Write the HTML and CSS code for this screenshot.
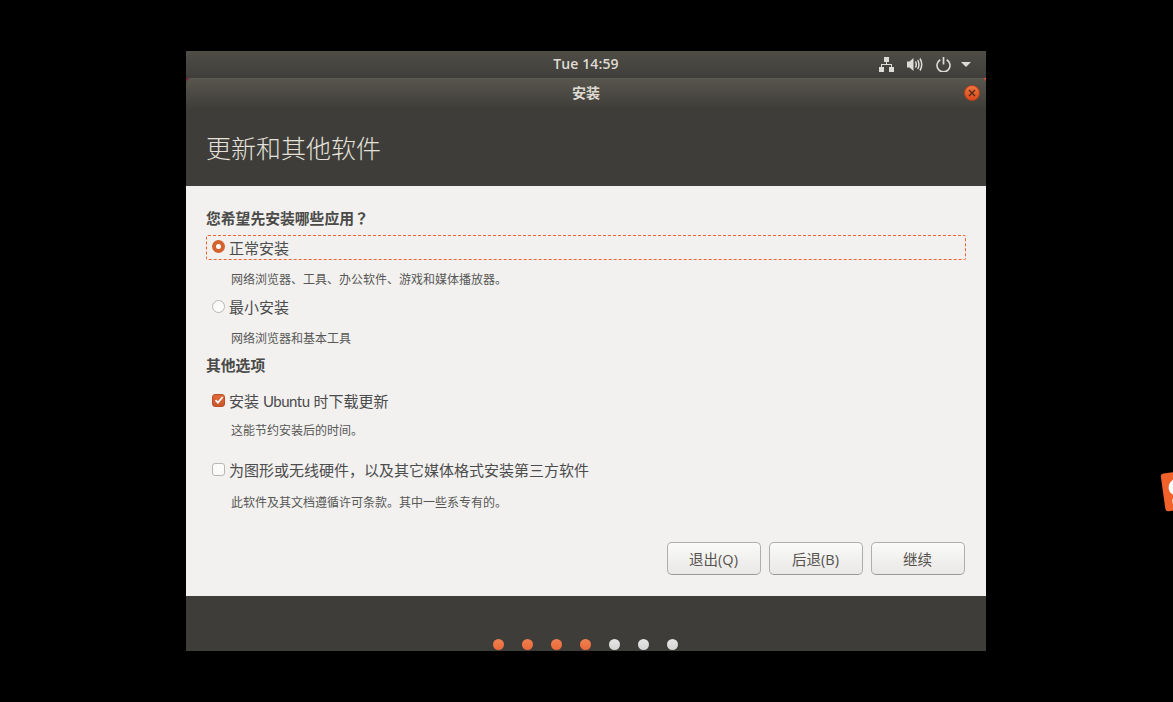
FILE: index.html
```html
<!DOCTYPE html>
<html lang="zh-CN">
<head>
  <meta charset="UTF-8" />
  <title>安装</title>
  <link rel="stylesheet" href="styles.css">
</head>
<body>
  <div class="screen">
    <div class="topbar">
      <span class="clock">Tue 14:59</span>
      <div class="tray">
        <svg class="tray-icon net" width="15" height="15" viewBox="0 0 15 15"><path d="M5 0h5v5h-2v2h5v3h2v5h-5v-5h2v-2h-9v2h2v5h-5v-5h2v-3h5v-2h-2z" fill="#dcdbd7"/></svg>
        <svg class="tray-icon vol" width="16" height="15" viewBox="0 0 16 15"><path d="M0 4.500h2.500l4-3.500v13l-4-3.500h-2.500z" fill="#dcdbd7"/><path d="M8.500 4.500q1.500 3 0 6M10.700 3q2.500 4.500 0 9M13 1.500q3.500 6 0 12" fill="none" stroke="#dcdbd7" stroke-width="1.500"/></svg>
        <svg class="tray-icon power" width="15" height="15" viewBox="0 0 15 15"><path d="M4.300 2.700a6.500 6.500 0 1 0 6.400 0" fill="none" stroke="#dcdbd7" stroke-width="1.600"/><path d="M7.500 0v7.500" stroke="#dcdbd7" stroke-width="1.700"/></svg>
        <span class="caret"></span>
      </div>
    </div>

    <div class="window">
      <div class="titlebar">
        <span class="title">安装</span>
        <span class="close">
          <svg width="8" height="8" viewBox="0 0 8 8"><path d="M1 1l6 6M7 1l-6 6" stroke="#4a2a1c" stroke-width="1.300"/></svg>
        </span>
      </div>
      <div class="page-head"><h1>更新和其他软件</h1></div>

      <div class="content">
        <h2 class="q-first">您希望先安装哪些应用<span class="qmark" lang="ja">？</span></h2>

        <div class="option focused">
          <span class="radio checked"></span>
          <span>正常安装</span>
        </div>
        <p class="desc desc-1">网络浏览器、工具、办公软件、游戏和媒体播放器。</p>

        <div class="option option-2">
          <span class="radio"></span>
          <span>最小安装</span>
        </div>
        <p class="desc desc-2">网络浏览器和基本工具</p>

        <h2 class="q-second">其他选项</h2>

        <div class="option option-3">
          <span class="check checked">
            <svg width="10" height="10" viewBox="0 0 10 10"><path d="M1.500 5.200l2.400 2.400 4.800-5.600" fill="none" stroke="#fff" stroke-width="1.800"/></svg>
          </span>
          <span>安装 <span class="latin">Ubuntu</span> 时下载更新</span>
        </div>
        <p class="desc desc-3">这能节约安装后的时间。</p>

        <div class="option option-4">
          <span class="check"></span>
          <span>为图形或无线硬件，以及其它媒体格式安装第三方软件</span>
        </div>
        <p class="desc desc-4">此软件及其文档遵循许可条款。其中一些系专有的。</p>

        <div class="buttons">
          <button>退出(Q)</button>
          <button>后退(B)</button>
          <button>继续</button>
        </div>
      </div>

      <div class="footer">
        <span class="dot on"></span><span class="dot on"></span><span class="dot on"></span><span class="dot on"></span>
        <span class="dot"></span><span class="dot"></span><span class="dot"></span>
      </div>
    </div>
  </div>

  <!-- launcher icon cut off at the right edge -->
  <div class="peek"><span class="peek-a"></span><span class="peek-b"></span></div>
</body>
</html>
```

FILE: styles.css
```css
* { box-sizing: border-box; }
html, body { height: 100%; }
body {
  margin: 0;
  background-color: #000;
  overflow: hidden;
  font-family: "Open Sans", "Noto Sans CJK SC", sans-serif;
  color: #3d3d3d;
}
.screen {
  width: 800px;
  height: 600px;
  margin: 51px 0 0 186px;
  display: flex;
  flex-direction: column;
  background: linear-gradient(90deg, #8a1538 0 8px, #3e3d39 8px calc(100% - 8px), #e0582a calc(100% - 8px));
}
.topbar {
  height: 27px;
  flex: none;
  display: flex;
  align-items: center;
  justify-content: center;
  position: relative;
  padding-bottom: 2px;
  background: linear-gradient(#4f4d46, #3f3e3a);
}
.clock {
  font-size: 14px;
  font-weight: 600;
  color: #dfdbd2;
  letter-spacing: 0.1px;
}
.tray {
  position: absolute;
  right: 15px;
  top: 6px;
  display: flex;
  align-items: center;
}
.tray-icon { display: block; flex: none; }
.tray-icon.net { margin-right: 13px; }
.tray-icon.vol { margin-right: 13px; }
.tray-icon.power { margin-right: 10px; }
.caret {
  width: 0;
  height: 0;
  border-left: 5px solid transparent;
  border-right: 5px solid transparent;
  border-top: 5px solid #dcdbd7;
}
.window {
  flex: 1;
  display: flex;
  flex-direction: column;
  min-height: 0;
  border-radius: 5px 5px 0 0;
  overflow: hidden;
  background-color: #3e3d39;
}
.titlebar {
  height: 30px;
  flex: none;
  position: relative;
  display: flex;
  align-items: center;
  justify-content: center;
  padding-bottom: 3px;
  border-top: 1px solid #5c5a52;
  background: linear-gradient(#57554c, #3f3e3a);
}
.title {
  font-size: 14px;
  font-weight: 700;
  color: #dfdbd2;
}
.close {
  position: absolute;
  right: 6px;
  top: 6px;
  width: 16px;
  height: 16px;
  border-radius: 50%;
  display: flex;
  align-items: center;
  justify-content: center;
  background: linear-gradient(#f0743f, #dc4a1c);
  border: 1px solid #b5401a;
}
.page-head {
  height: 78px;
  flex: none;
  padding: 22px 0 0 20px;
}
.page-head h1 {
  margin: 0;
  font-size: 25px;
  line-height: 36px;
  font-weight: 300;
  color: #e4e1da;
}
.content {
  height: 410px;
  flex: none;
  padding: 0 20px;
  background-color: #f2f1f0;
}
h2 {
  margin: 0;
  font-size: 14.800px;
  line-height: 20px;
  font-weight: 700;
  color: #4a4a48;
}
.qmark { font-family: "Noto Sans CJK JP", sans-serif; }
.q-first { padding-top: 22px; height: 49px; line-height: 20px; }
.q-second { margin-top: 8px; }
.option {
  display: flex;
  align-items: center;
  height: 24px;
  font-size: 15px;
  color: #4c4c4c;
  padding-left: 5px;
  border: 1px solid transparent;
}
.focused {
  height: 25px;
  border: 1px dashed #ee6430;
  border-radius: 2px;
}
.focused .radio { margin-bottom: 2px; }
.latin {
  font-family: Lato, "Noto Sans CJK SC", sans-serif;
  letter-spacing: -0.5px;
}
.option-3 { margin-top: 13px; }
.option-4 { margin-top: 17px; }
.radio, .check {
  flex: none;
  width: 13px;
  height: 13px;
  margin-right: 4px;
  background: #fbfbfa;
  border: 1px solid #b9b7b3;
  display: flex;
  align-items: center;
  justify-content: center;
}
.radio { border-radius: 50%; }
.check { border-radius: 3px; }
.radio.checked {
  background: #fff;
  border: 4px solid #d4622f;
}
.check.checked {
  background: linear-gradient(#e0693a, #c9562a);
  border-color: #b94e26;
}
.desc {
  margin: 0;
  padding-left: 25px;
  font-size: 12px;
  line-height: 18px;
  color: #575755;
}
.desc-1 { margin-top: 11px; height: 23px; }
.desc-2 { margin-top: 12px; height: 17px; }
.desc-3 { margin-top: 10px; }
.desc-4 { margin-top: 13px; }
.buttons {
  display: flex;
  justify-content: flex-end;
  gap: 8px;
  margin: 30px 1px 0 0;
}
.buttons button {
  width: 94px;
  height: 33px;
  padding: 0 1px 0 0;
  font-family: inherit;
  font-size: 14.500px;
  color: #55524e;
  border: 1px solid #b0aeaa;
  border-bottom-color: #9a9894;
  border-radius: 5px;
  background: linear-gradient(#fafaf9, #e9e8e6);
}
.footer {
  flex: 1;
  display: flex;
  justify-content: center;
  gap: 18px;
  padding: 43px 2px 0 0;
  background-color: #3e3d39;
}
.dot {
  width: 11px;
  height: 11px;
  border-radius: 50%;
  background: linear-gradient(#e6e6e6, #d4d4d4);
}
.dot.on { background: linear-gradient(#f08050, #ea6a38); }
.peek {
  position: absolute;
  left: 1163px;
  top: 472px;
  width: 26px;
  height: 38px;
  border-radius: 3px;
  transform: rotate(-8deg);
  background-color: #f0622a;
}
.peek span {
  position: absolute;
  background-color: #fff;
}
.peek-a {
  left: 6px;
  top: 7px;
  width: 18px;
  height: 17px;
  border-radius: 50%;
}
.peek-b {
  left: 8px;
  top: 26px;
  width: 6px;
  height: 7px;
  border-radius: 2px;
}
```
